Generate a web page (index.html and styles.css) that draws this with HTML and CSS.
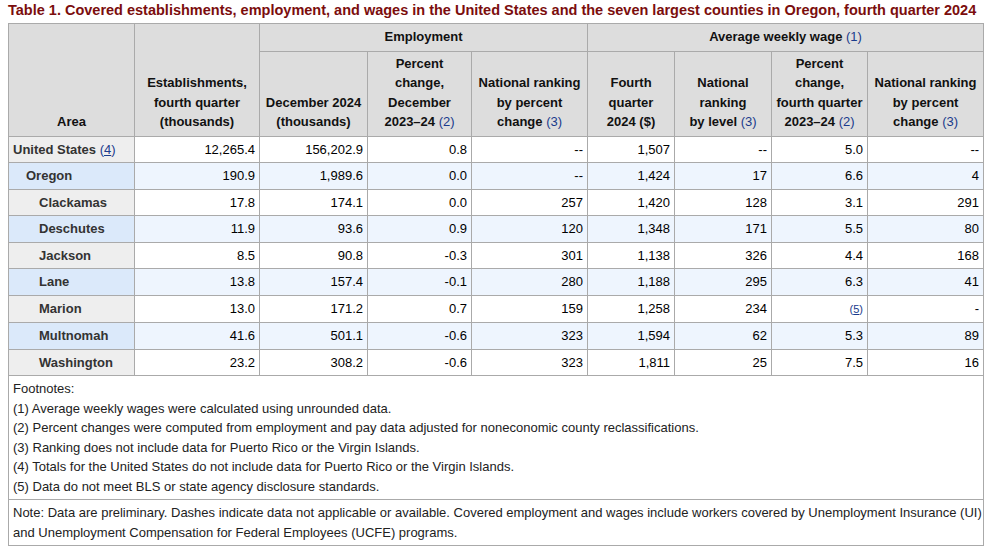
FILE: index.html
```html
<!DOCTYPE html>
<html lang="en">
<head>
<meta charset="utf-8">
<title>Table 1</title>
<link rel="stylesheet" href="styles.css">
</head>
<body>
<h2 class="caption">Table 1. Covered establishments, employment, and wages in the United States and the seven largest counties in Oregon, fourth quarter 2024</h2>
<table class="data">
  <colgroup>
    <col class="c-area"><col class="c-est"><col class="c-dec"><col class="c-pct"><col class="c-rank">
    <col class="c-q4"><col class="c-lvl"><col class="c-wpct"><col class="c-wrank">
  </colgroup>
  <thead>
    <tr>
      <th rowspan="2">Area</th>
      <th rowspan="2">Establishments,<br>fourth quarter<br>(thousands)</th>
      <th colspan="3" class="group">Employment</th>
      <th colspan="4" class="group">Average weekly wage <a class="fn">(1)</a></th>
    </tr>
    <tr>
      <th>December 2024<br>(thousands)</th>
      <th>Percent<br>change,<br>December<br>2023–24 <a class="fn">(2)</a></th>
      <th>National ranking<br>by percent<br>change <a class="fn">(3)</a></th>
      <th>Fourth<br>quarter<br>2024 ($)</th>
      <th>National<br>ranking<br>by level <a class="fn">(3)</a></th>
      <th>Percent<br>change,<br>fourth quarter<br>2023–24 <a class="fn">(2)</a></th>
      <th>National ranking<br>by percent<br>change <a class="fn">(3)</a></th>
    </tr>
  </thead>
  <tbody>
    <tr class="odd"><th class="l0">United States <a class="fn">(<span class="ul">4</span>)</a></th><td>12,265.4</td><td>156,202.9</td><td>0.8</td><td>--</td><td>1,507</td><td>--</td><td>5.0</td><td>--</td></tr>
    <tr class="even"><th class="l1">Oregon</th><td>190.9</td><td>1,989.6</td><td>0.0</td><td>--</td><td>1,424</td><td>17</td><td>6.6</td><td>4</td></tr>
    <tr class="odd"><th class="l2">Clackamas</th><td>17.8</td><td>174.1</td><td>0.0</td><td>257</td><td>1,420</td><td>128</td><td>3.1</td><td>291</td></tr>
    <tr class="even"><th class="l2">Deschutes</th><td>11.9</td><td>93.6</td><td>0.9</td><td>120</td><td>1,348</td><td>171</td><td>5.5</td><td>80</td></tr>
    <tr class="odd"><th class="l2">Jackson</th><td>8.5</td><td>90.8</td><td>-0.3</td><td>301</td><td>1,138</td><td>326</td><td>4.4</td><td>168</td></tr>
    <tr class="even"><th class="l2">Lane</th><td>13.8</td><td>157.4</td><td>-0.1</td><td>280</td><td>1,188</td><td>295</td><td>6.3</td><td>41</td></tr>
    <tr class="odd"><th class="l2">Marion</th><td>13.0</td><td>171.2</td><td>0.7</td><td>159</td><td>1,258</td><td>234</td><td><a class="fn small">(<span class="ul">5</span>)</a></td><td>-</td></tr>
    <tr class="even"><th class="l2">Multnomah</th><td>41.6</td><td>501.1</td><td>-0.6</td><td>323</td><td>1,594</td><td>62</td><td>5.3</td><td>89</td></tr>
    <tr class="odd"><th class="l2">Washington</th><td>23.2</td><td>308.2</td><td>-0.6</td><td>323</td><td>1,811</td><td>25</td><td>7.5</td><td>16</td></tr>
  </tbody>
  <tfoot>
    <tr>
      <td colspan="9" class="notes">
        <p>Footnotes:</p>
        <p>(1) Average weekly wages were calculated using unrounded data.</p>
        <p>(2) Percent changes were computed from employment and pay data adjusted for noneconomic county reclassifications.</p>
        <p>(3) Ranking does not include data for Puerto Rico or the Virgin Islands.</p>
        <p>(4) Totals for the United States do not include data for Puerto Rico or the Virgin Islands.</p>
        <p>(5) Data do not meet BLS or state agency disclosure standards.</p>
      </td>
    </tr>
    <tr>
      <td colspan="9" class="notes">
        <p class="nowrap">Note: Data are preliminary. Dashes indicate data not applicable or available. Covered employment and wages include workers covered by Unemployment Insurance (UI)</p>
        <p>and Unemployment Compensation for Federal Employees (UCFE) programs.</p>
      </td>
    </tr>
  </tfoot>
</table>
</body>
</html>
```

FILE: styles.css
```css
html, body {
  margin: 0;
  padding: 0;
  background: #fff;
}
body {
  padding: 0 8px;
  font-family: "Liberation Sans", Arial, sans-serif;
  font-size: 13px;
  line-height: 19.5px;
  color: #000;
}
.caption {
  margin: 0 0 3px 0;
  font-size: 14.5px;
  line-height: 20px;
  font-weight: bold;
  color: #7b0d0d;
  white-space: nowrap;
}
.data {
  border-collapse: collapse;
  table-layout: fixed;
  width: 975px;
}
.c-area { width: 126px; }
.c-est { width: 125px; }
.c-dec { width: 108px; }
.c-pct { width: 104px; }
.c-rank { width: 116px; }
.c-q4 { width: 87px; }
.c-lvl { width: 97px; }
.c-wpct { width: 96px; }
.c-wrank { width: 116px; }

.data th, .data td {
  border: 1px solid #aaa;
  padding: 3px 4px;
}
.data thead th {
  background: #ddd;
  color: #111;
  font-weight: bold;
  text-align: center;
  vertical-align: bottom;
  white-space: nowrap;
  padding: 2px 2px 4px;
}
.data thead th.group {
  padding: 3px 4px 4px;
}
.data tbody th {
  text-align: left;
  font-weight: bold;
  color: #333;
}
.data tbody td {
  text-align: right;
  color: #000;
}
.odd th { background: #eee; }
.odd td { background: #fff; }
.even th { background: #dbe9fa; }
.even td { background: #eef5fe; }

.data tbody th.l0 { padding-left: 4px; }
.data tbody th.l1 { padding-left: 17px; }
.data tbody th.l2 { padding-left: 30px; }

.fn {
  color: #1a3b8c;
  font-weight: normal;
  text-decoration: none;
}
.ul { text-decoration: underline; }
.small { font-size: 11px; }

.notes {
  text-align: left;
  color: #222;
  background: #fff;
}
.data td.notes {
  padding: 3px 2px 3px 4px;
}
.notes p {
  margin: 0;
}
.notes .nowrap {
  white-space: nowrap;
}
```
